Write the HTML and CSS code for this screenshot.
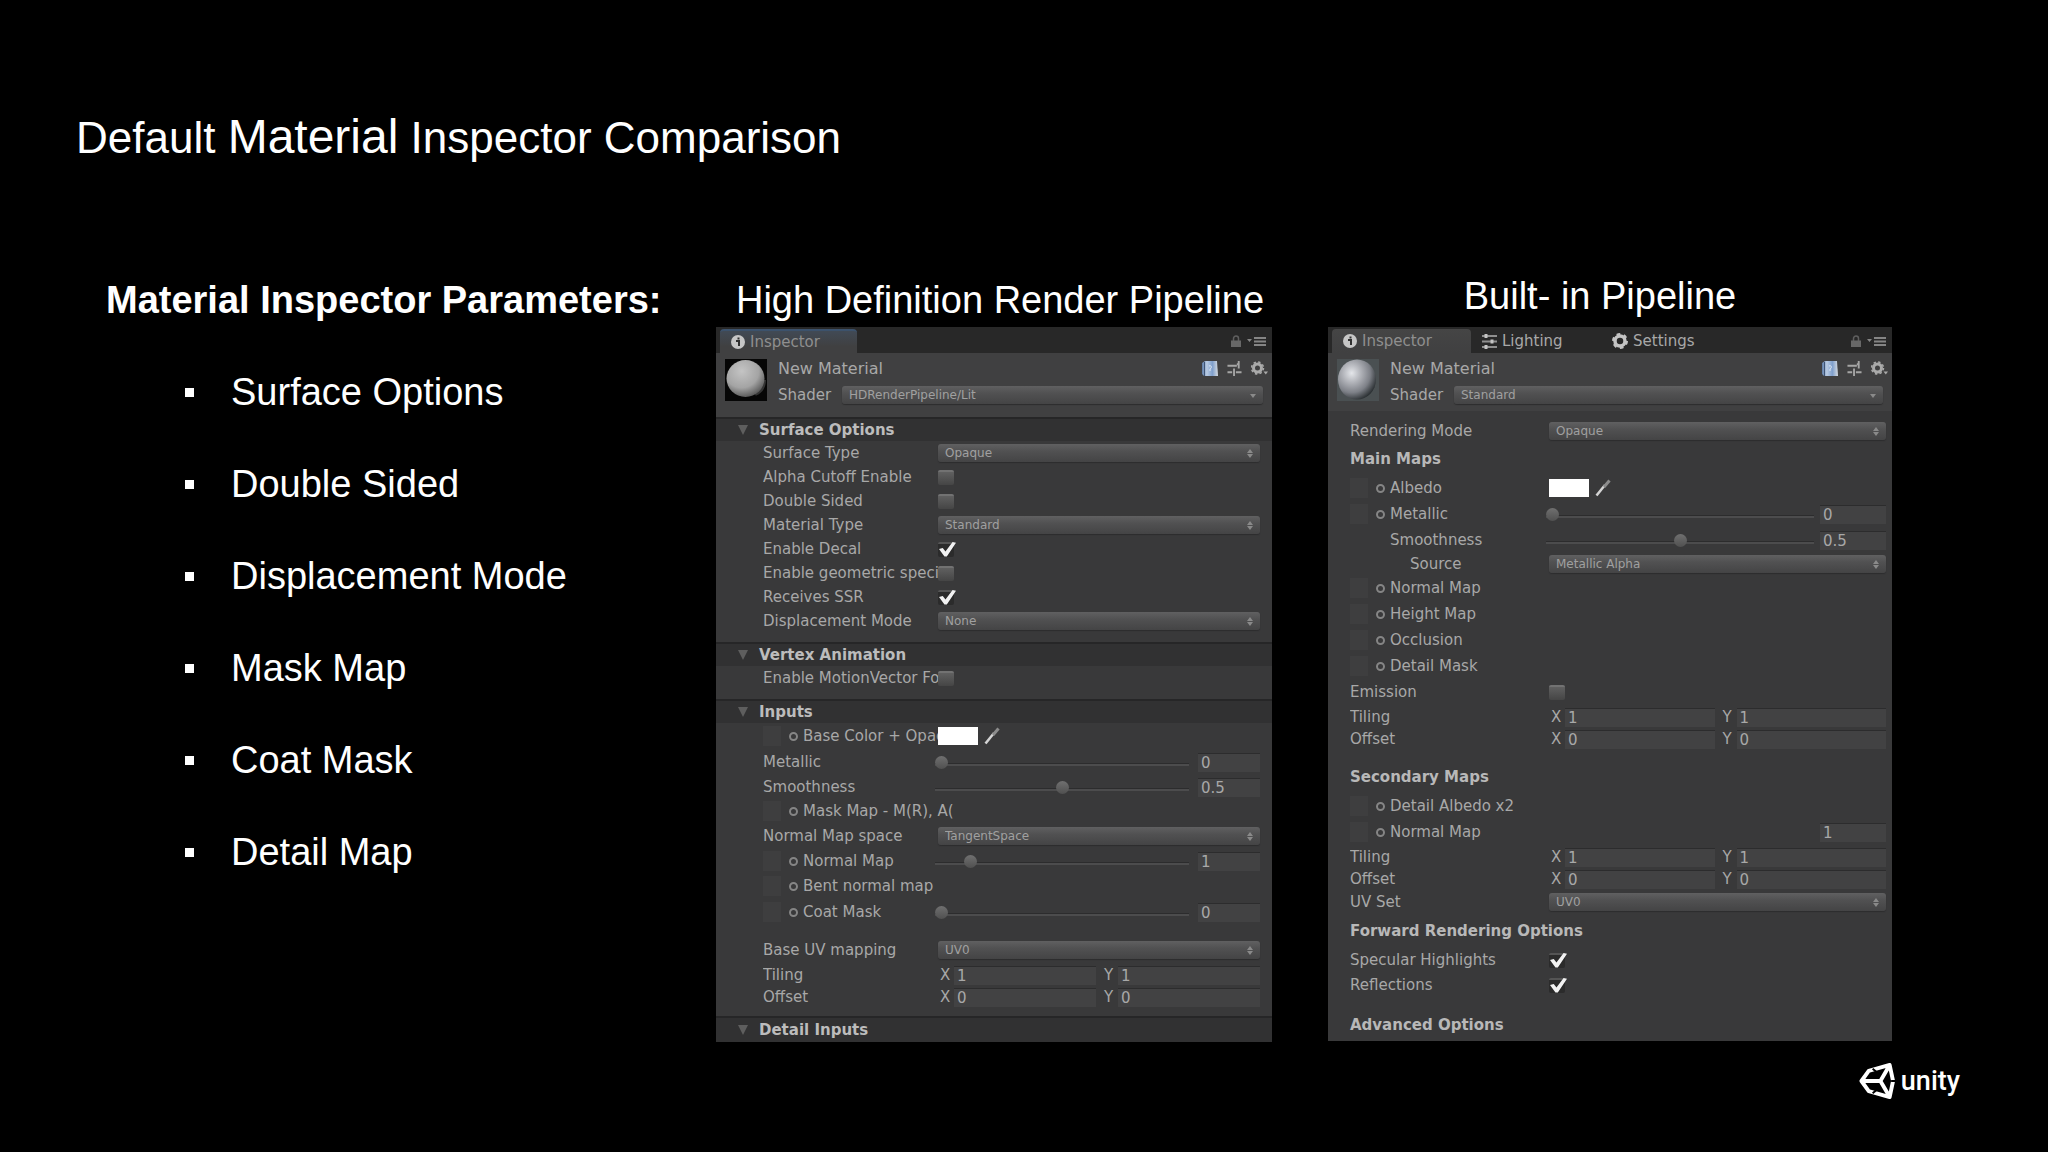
FILE: index.html
```html
<!DOCTYPE html>
<html lang="en">
<head>
<meta charset="utf-8">
<title>Default Material Inspector Comparison</title>
<link rel="stylesheet" href="styles.css">
</head>
<body>
<svg class="defs" aria-hidden="true">
  <defs>
    <radialGradient id="ball-hd" cx="0.4" cy="0.3" r="0.75"><stop offset="0" stop-color="#c4c4c4"/><stop offset="0.6" stop-color="#a4a4a4"/><stop offset="1" stop-color="#505050"/></radialGradient>
    <radialGradient id="ball-std" cx="0.36" cy="0.34" r="0.7"><stop offset="0" stop-color="#e4e6ea"/><stop offset="0.35" stop-color="#b0b2b8"/><stop offset="0.7" stop-color="#7d8087"/><stop offset="1" stop-color="#2c3134"/></radialGradient>
    <linearGradient id="book-face" x1="0" x2="1"><stop offset="0" stop-color="#5d7ba5"/><stop offset="0.3" stop-color="#b9cbe3"/><stop offset="0.65" stop-color="#7f9fcc"/><stop offset="1" stop-color="#d5dae0"/></linearGradient>
    <symbol id="i-info" viewBox="0 0 14 14"><circle cx="7" cy="7" r="7" fill="#c6c6c6"/><path d="M5 6h3v5M7.500 2.500v2" stroke="#303030" stroke-width="2" fill="none"/></symbol>
    <symbol id="i-lock" viewBox="0 0 10 12"><path d="M2.500 6V3.500a2.500 2.500 0 0 1 5 0V6" fill="none" stroke="#5f5f5f" stroke-width="1.500"/><rect y="5.500" width="10" height="6.500" fill="#686868"/></symbol>
    <symbol id="i-menu" viewBox="0 0 19 12"><path d="M0 4h5L2.500 7zM7 2h12v2H7zM7 5.500h12v2H7zM7 9h12v2H7z" fill="#858585"/></symbol>
    <symbol id="i-book" viewBox="0 0 17 16"><path d="M1 2 4 0h12l1 15H3l-2-2z" fill="url(#book-face)"/><path d="M3.500 1v14" stroke="#3d5274" fill="none"/><path d="M8 5c3-1 3 2 1 3v2" stroke="#dfe9f5" fill="none"/></symbol>
    <symbol id="i-preset" viewBox="0 0 15 16"><path d="M0 5h10M12 0v8M10 3.500h3M0 12h5M7 8v8M9 12h6" stroke="#a5a5a5" stroke-width="2" fill="none"/></symbol>
    <symbol id="i-gear" viewBox="0 0 17 16"><circle cx="6.500" cy="7" r="4" fill="none" stroke="#aaa" stroke-width="3"/><circle cx="6.500" cy="7" r="6" fill="none" stroke="#aaa" stroke-width="1.500" stroke-dasharray="2.400 2.300"/><path d="M12.500 10.500h4.500l-2.200 3z" fill="#aaa"/></symbol>
    <symbol id="i-cog" viewBox="0 0 16 16"><circle cx="8" cy="8" r="5" fill="none" stroke="#c4c4c4" stroke-width="3.500"/><circle cx="8" cy="8" r="7" fill="none" stroke="#c4c4c4" stroke-width="2" stroke-dasharray="3.700 3.630"/></symbol>
    <symbol id="i-light" viewBox="0 0 15 15"><path d="M0 2h15M0 7.500h15M0 13h15" stroke="#8f8f8f" stroke-width="2"/><path d="M4 0v4M10 5.500v4M4 11v4" stroke="#c4c4c4" stroke-width="3"/></symbol>
    <symbol id="i-picker" viewBox="0 0 16 18"><path d="M1.500 16.500 10 6" stroke="#d4d4d4" stroke-width="2.500"/><path d="M9 8l5.500-6.500" stroke="#8c8c8c" stroke-width="3"/></symbol>
    <symbol id="i-fold" viewBox="0 0 12 10"><path d="M1 0h10L6 10z" fill="#5e5e5e"/></symbol>
  </defs>
</svg>

<main class="slide">
  <h1 class="title">Default <span class="title-big">Material</span> Inspector Comparison</h1>

  <div class="columns">
    <section class="summary">
      <h2 class="summary-title">Material Inspector Parameters:</h2>
      <ul class="summary-list">
        <li>Surface Options</li>
        <li>Double Sided</li>
        <li>Displacement Mode</li>
        <li>Mask Map</li>
        <li>Coat Mask</li>
        <li>Detail Map</li>
      </ul>
    </section>

    <section class="pipeline">
      <h2 class="caption caption-hd">High Definition Render Pipeline</h2>
      <div class="inspector hd">
        <div class="tabs">
          <button class="tab tab-active tab-focus"><svg class="ic14"><use href="#i-info"/></svg>Inspector</button>
          <div class="tab-tools"><svg class="lock"><use href="#i-lock"/></svg><svg class="menu"><use href="#i-menu"/></svg></div>
        </div>
        <div class="head">
          <svg class="preview" viewBox="0 0 42 42"><rect width="42" height="42" fill="#060606"/><path d="M30 35q9-4 9-14" stroke="#333" stroke-width="4" fill="none"/><ellipse cx="20.500" cy="19.500" rx="19" ry="18.500" fill="url(#ball-hd)"/></svg>
          <div class="head-main">
            <div class="head-line"><span class="name">New Material</span><span class="head-icons"><svg class="ic17"><use href="#i-book"/></svg><svg class="ic15"><use href="#i-preset"/></svg><svg class="ic17"><use href="#i-gear"/></svg></span></div>
            <div class="head-line"><label class="shader" for="hs">Shader</label><span class="drop drop-one"><select id="hs"><option>HDRenderPipeline/Lit</option></select></span></div>
          </div>
        </div>

        <h3 class="fold"><svg><use href="#i-fold"/></svg>Surface Options</h3>
        <div class="group">
          <div class="row"><label for="h1">Surface Type</label><span class="drop"><select id="h1"><option>Opaque</option></select></span></div>
          <div class="row"><label for="h2">Alpha Cutoff Enable</label><input type="checkbox" id="h2"></div>
          <div class="row"><label for="h3">Double Sided</label><input type="checkbox" id="h3"></div>
          <div class="row"><label for="h4">Material Type</label><span class="drop"><select id="h4"><option>Standard</option></select></span></div>
          <div class="row"><label for="h5">Enable Decal</label><input type="checkbox" id="h5" checked></div>
          <div class="row"><label for="h6">Enable geometric speci</label><input type="checkbox" id="h6"></div>
          <div class="row"><label for="h7">Receives SSR</label><input type="checkbox" id="h7" checked></div>
          <div class="row"><label for="h8">Displacement Mode</label><span class="drop"><select id="h8"><option>None</option></select></span></div>
        </div>

        <h3 class="fold"><svg><use href="#i-fold"/></svg>Vertex Animation</h3>
        <div class="group">
          <div class="row"><label for="h9">Enable MotionVector Fo</label><input type="checkbox" id="h9"></div>
        </div>

        <h3 class="fold"><svg><use href="#i-fold"/></svg>Inputs</h3>
        <div class="group">
          <div class="row tall"><label class="tex" for="h10"><i class="slot"></i><i class="ring"></i>Base Color + Opac</label><span class="color"><button class="swatch" id="h10" aria-label="Base color"></button><svg class="picker"><use href="#i-picker"/></svg></span></div>
          <div class="row tall"><label for="h11">Metallic</label><span class="slide-pair"><input type="range" id="h11" min="0" max="100" value="0"><input type="text" class="num" value="0" aria-label="Metallic value"></span></div>
          <div class="row"><label for="h12">Smoothness</label><span class="slide-pair"><input type="range" id="h12" min="0" max="100" value="50"><input type="text" class="num" value="0.5" aria-label="Smoothness value"></span></div>
          <div class="row wide"><span class="tex"><i class="slot"></i><i class="ring"></i>Mask Map - M(R), A(</span></div>
          <div class="row tall"><label for="h13">Normal Map space</label><span class="drop"><select id="h13"><option>TangentSpace</option></select></span></div>
          <div class="row"><label class="tex" for="h14"><i class="slot"></i><i class="ring"></i>Normal Map</label><span class="slide-pair"><input type="range" id="h14" min="0" max="100" value="12"><input type="text" class="num" value="1" aria-label="Normal map value"></span></div>
          <div class="row tall"><span class="tex"><i class="slot"></i><i class="ring"></i>Bent normal map</span></div>
          <div class="row tall gap-after"><label class="tex" for="h15"><i class="slot"></i><i class="ring"></i>Coat Mask</label><span class="slide-pair"><input type="range" id="h15" min="0" max="100" value="0"><input type="text" class="num" value="0" aria-label="Coat mask value"></span></div>
          <div class="row tall"><label for="h16">Base UV mapping</label><span class="drop"><select id="h16"><option>UV0</option></select></span></div>
          <div class="row short"><span>Tiling</span><span class="vec"><label for="h17">X</label><input type="text" id="h17" value="1"><label for="h18">Y</label><input type="text" id="h18" value="1"></span></div>
          <div class="row short"><span>Offset</span><span class="vec"><label for="h19">X</label><input type="text" id="h19" value="0"><label for="h20">Y</label><input type="text" id="h20" value="0"></span></div>
        </div>

        <h3 class="fold"><svg><use href="#i-fold"/></svg>Detail Inputs</h3>
      </div>
    </section>

    <section class="pipeline">
      <h2 class="caption caption-std">Built- in Pipeline</h2>
      <div class="inspector std">
        <div class="tabs">
          <button class="tab tab-active"><svg class="ic14"><use href="#i-info"/></svg>Inspector</button>
          <button class="tab"><svg class="ic15"><use href="#i-light"/></svg>Lighting</button>
          <button class="tab"><svg class="ic16"><use href="#i-cog"/></svg>Settings</button>
          <div class="tab-tools"><svg class="lock"><use href="#i-lock"/></svg><svg class="menu"><use href="#i-menu"/></svg></div>
        </div>
        <div class="head">
          <svg class="preview" viewBox="0 0 42 42"><rect width="42" height="42" fill="#4a5052"/><ellipse cx="20" cy="20.500" rx="19" ry="20" fill="url(#ball-std)"/></svg>
          <div class="head-main">
            <div class="head-line"><span class="name">New Material</span><span class="head-icons"><svg class="ic17"><use href="#i-book"/></svg><svg class="ic15"><use href="#i-preset"/></svg><svg class="ic17"><use href="#i-gear"/></svg></span></div>
            <div class="head-line"><label class="shader" for="ss">Shader</label><span class="drop drop-one"><select id="ss"><option>Standard</option></select></span></div>
          </div>
        </div>

        <div class="group">
          <div class="row"><label for="s1">Rendering Mode</label><span class="drop"><select id="s1"><option>Opaque</option></select></span></div>
          <h3 class="subhead">Main Maps</h3>
          <div class="row tall"><label class="tex" for="s2"><i class="slot"></i><i class="ring"></i>Albedo</label><span class="color"><button class="swatch" id="s2" aria-label="Albedo color"></button><svg class="picker"><use href="#i-picker"/></svg></span></div>
          <div class="row tall"><label class="tex" for="s3"><i class="slot"></i><i class="ring"></i>Metallic</label><span class="slide-pair"><input type="range" id="s3" min="0" max="100" value="0"><input type="text" class="num" value="0" aria-label="Metallic value"></span></div>
          <div class="row tall"><label class="in1" for="s4">Smoothness</label><span class="slide-pair"><input type="range" id="s4" min="0" max="100" value="50"><input type="text" class="num" value="0.5" aria-label="Smoothness value"></span></div>
          <div class="row short"><label class="in2" for="s5">Source</label><span class="drop"><select id="s5"><option>Metallic Alpha</option></select></span></div>
          <div class="row tall"><span class="tex"><i class="slot"></i><i class="ring"></i>Normal Map</span></div>
          <div class="row tall"><span class="tex"><i class="slot"></i><i class="ring"></i>Height Map</span></div>
          <div class="row tall"><span class="tex"><i class="slot"></i><i class="ring"></i>Occlusion</span></div>
          <div class="row tall"><span class="tex"><i class="slot"></i><i class="ring"></i>Detail Mask</span></div>
          <div class="row tall"><label for="s6">Emission</label><input type="checkbox" id="s6"></div>
          <div class="row short"><span>Tiling</span><span class="vec"><label for="s7">X</label><input type="text" id="s7" value="1"><label for="s8">Y</label><input type="text" id="s8" value="1"></span></div>
          <div class="row short gap-after"><span>Offset</span><span class="vec"><label for="s9">X</label><input type="text" id="s9" value="0"><label for="s10">Y</label><input type="text" id="s10" value="0"></span></div>
          <h3 class="subhead">Secondary Maps</h3>
          <div class="row tall"><span class="tex"><i class="slot"></i><i class="ring"></i>Detail Albedo x2</span></div>
          <div class="row tall"><label class="tex" for="s11"><i class="slot"></i><i class="ring"></i>Normal Map</label><span class="slide-pair"><input type="text" class="num" id="s11" value="1"></span></div>
          <div class="row short"><span>Tiling</span><span class="vec"><label for="s12">X</label><input type="text" id="s12" value="1"><label for="s13">Y</label><input type="text" id="s13" value="1"></span></div>
          <div class="row short"><span>Offset</span><span class="vec"><label for="s14">X</label><input type="text" id="s14" value="0"><label for="s15">Y</label><input type="text" id="s15" value="0"></span></div>
          <div class="row tall"><label for="s16">UV Set</label><span class="drop"><select id="s16"><option>UV0</option></select></span></div>
          <h3 class="subhead">Forward Rendering Options</h3>
          <div class="row tall"><label for="s17">Specular Highlights</label><input type="checkbox" id="s17" checked></div>
          <div class="row gap-after"><label for="s18">Reflections</label><input type="checkbox" id="s18" checked></div>
          <h3 class="subhead">Advanced Options</h3>
        </div>
      </div>
    </section>
  </div>

  <footer class="brand">
    <svg class="brand-mark" viewBox="0 0 37 38"><path d="M2.500 19 10 8.500 31.500 2.500 35 19 31.500 35.500 10 29.500zM3 19h19M31 3.500 22 19l9 15.500" fill="none" stroke="#fff" stroke-width="4" stroke-linejoin="round"/><path d="M14 6.500l5 4M14 31.500l5-4M33 19h4" stroke="#000" stroke-width="2"/></svg>
    <span>unity</span>
  </footer>
</main>
</body>
</html>
```
FILE: styles.css
```css
* { box-sizing: border-box; }

body {
  margin: 0;
  background: #000;
  color: #fff;
  font-family: "Liberation Sans", Arial, sans-serif;
}

.defs { position: absolute; width: 0; height: 0; }
h1, h2, h3, ul { margin: 0; padding: 0; }
svg { display: block; flex: none; }

.slide { padding: 103px 88px 0 76px; }

.title {
  font: 400 44px/68px "Liberation Sans Narrow", "Arial Narrow", "Liberation Sans", sans-serif;
}
.title-big { font-size: 48px; }

.columns {
  display: grid;
  grid-template-columns: minmax(0, 554fr) minmax(0, 556fr) minmax(0, 564fr);
  column-gap: 56px;
  align-items: start;
  padding: 82px 68px 0 30px;
}

/* Left-hand summary */
.summary-title { font-size: 38px; line-height: 92px; white-space: nowrap; }
.summary-list { list-style: none; }
.summary-list li {
  display: flex;
  align-items: center;
  gap: 37px;
  padding-left: 79px;
  font-size: 38px;
  line-height: 92px;
}
.summary-list li::before { content: ""; width: 9px; height: 9px; background: #fff; }

.caption { height: 73px; font-weight: 400; font-size: 38px; text-align: center; white-space: nowrap; }
.caption-hd { line-height: 92px; padding-left: 12px; }
.caption-std { line-height: 84px; padding-right: 20px; }

/* Inspector window */
.inspector {
  --indent: 47px;
  --label: 175px;
  --right: 12px;
  --num: 62px;
  background: #39393a;
  color: #a8a8a8;
  font: 15px/24px "DejaVu Sans", Verdana, sans-serif;
}
.std { --indent: 22px; --label: 199px; --right: 6px; --num: 66px; }
.inspector input, .inspector select, .inspector button { margin: 0; border: 0; color: inherit; font: inherit; }

.tabs { display: flex; height: 26px; padding: 2px 6px 0 4px; background: #282828; }
.tab {
  display: flex;
  align-items: center;
  gap: 5px;
  width: 130px;
  padding: 0 0 0 11px;
  background: none;
  line-height: 24px;
}
.std .tab-active { width: 139px; }
.inspector .tab-active { background: linear-gradient(#454545, #404041); border-radius: 4px 4px 0 0; color: #8f8f8f; }
.hd .tab-active { width: 137px; }
.inspector .tab-focus { border-top: 2px solid #3c526c; background: linear-gradient(#414a55, #404041 70%); }
.tab-tools { display: flex; align-items: center; gap: 6px; margin-left: auto; }
.lock { width: 10px; height: 12px; }
.menu { width: 19px; height: 12px; }
.ic14 { width: 14px; height: 14px; }
.ic15 { width: 15px; height: 15px; }
.ic16 { width: 16px; height: 16px; }
.ic17 { width: 17px; height: 16px; }

.head { display: flex; gap: 11px; height: 64px; padding: 6px 4px 0 9px; background: #404041; }
.std .head { height: 58px; }
.preview { width: 42px; height: 42px; }
.head-main { flex: 1; min-width: 0; }
.head-line { display: flex; align-items: center; height: 26px; margin-top: -3px; }
.head-line + .head-line { margin-top: 0; padding-right: 5px; }
.name { font-size: 16px; }
.head-icons { display: flex; gap: 9px; margin-left: auto; }
.shader { width: 64px; }

.fold {
  display: flex;
  align-items: center;
  gap: 10px;
  height: 24px;
  padding-left: 21px;
  border-top: 2px solid #262627;
  background: #313132;
  color: #bcbcbc;
  font-size: 15px;
  line-height: 22px;
}
.fold svg { width: 12px; height: 10px; }

.group { padding: 0 var(--right) 9px var(--indent); }
.fold:last-child { height: 26px; }
.std .group { padding-top: 8px; padding-bottom: 0; }
.subhead { color: #b8b8b8; font-size: 15px; line-height: 32px; }

.row { display: grid; grid-template-columns: var(--label) minmax(0, 1fr); align-items: center; height: 24px; }
.tall { height: 26px; }
.short { height: 22px; }
.wide { grid-template-columns: 192px; }
.gap-after { margin-bottom: 12px; }
.row > :first-child { overflow: hidden; white-space: nowrap; }
.tex { display: flex; align-items: center; }
.slot { flex: none; width: 18px; height: 20px; margin-right: 8px; background: #3e3e3f; }
.ring { flex: none; width: 9px; height: 9px; margin-right: 5px; border: 2px solid #858585; border-radius: 50%; }
.in1 { padding-left: 40px; }
.in2 { padding-left: 60px; }

/* Drop-downs */
.drop { position: relative; display: block; flex: 1; height: 18px; }
.inspector .drop select {
  appearance: none;
  display: block;
  width: 100%;
  height: 18px;
  padding: 0 7px;
  border-radius: 3px;
  background: linear-gradient(#606061, #515152 40%, #444445);
  box-shadow: 0 1px 1px #2d2d2e;
  color: #a0a0a0;
  font-size: 12px;
  line-height: 18px;
}
.drop::before, .drop::after {
  content: "";
  position: absolute;
  right: 7px;
  border: 3px solid transparent;
  pointer-events: none;
}
.drop::before { top: 2px; border-bottom: 4px solid #8a8a8a; }
.drop::after { top: 10px; border-top: 4px solid #8a8a8a; }
.drop-one::before { display: none; }
.drop-one::after { top: 8px; }

/* Tick boxes */
.row input[type="checkbox"] {
  appearance: none;
  position: relative;
  width: 16px;
  height: 15px;
  border-top: 2px solid #727272;
  border-radius: 2px;
  background: linear-gradient(#606060, #454545);
}
.row input[type="checkbox"]:checked { background: #2b2b2b; border-top-color: #555; }
.row input[type="checkbox"]:checked::after {
  content: "";
  position: absolute;
  inset: -2px -2px 0 1px;
  background: #f2f2f2;
  clip-path: polygon(0 50%, 22% 44%, 38% 66%, 80% 4%, 100% 8%, 46% 100%, 32% 100%);
}

/* Colour field */
.color { display: flex; align-items: center; gap: 6px; }
.inspector .swatch { width: 40px; height: 18px; padding: 0; background: #fff; }
.picker { width: 16px; height: 18px; }

/* Sliders and number fields */
.slide-pair { display: flex; align-items: center; justify-content: flex-end; gap: 9px; }
.std .slide-pair { gap: 6px; }
.slide-pair input[type="range"] {
  appearance: none;
  flex: 1;
  min-width: 0;
  height: 14px;
  margin: 0 0 0 -3px;
  background: linear-gradient(#2c2c2d, #2c2c2d) 0 8px / 100% 1px no-repeat,
    linear-gradient(#4c4c4d, #4c4c4d) 0 9px / 100% 2px no-repeat;
}
.slide-pair input[type="range"]::-webkit-slider-thumb {
  appearance: none;
  width: 13px;
  height: 13px;
  border-radius: 50%;
  background: linear-gradient(#707070, #505050);
}
.inspector input[type="text"] {
  min-width: 0;
  height: 19px;
  padding: 0 0 0 3px;
  border-top: 1px solid #2c2c2d;
  background: #424243;
  line-height: 18px;
}
.slide-pair .num { width: var(--num); }
.vec { display: grid; grid-template-columns: 16px minmax(0, 1fr) 22px minmax(0, 1fr); align-items: center; }
.vec label { padding-left: 2px; }
.vec label + input + label { padding-left: 8px; }

/* Brand mark */
.brand { display: flex; justify-content: flex-end; align-items: center; gap: 6px; padding-top: 20px; }
.brand span { font: 500 27px/36px Roboto, sans-serif; }
.brand-mark { width: 36px; height: 38px; }
```
